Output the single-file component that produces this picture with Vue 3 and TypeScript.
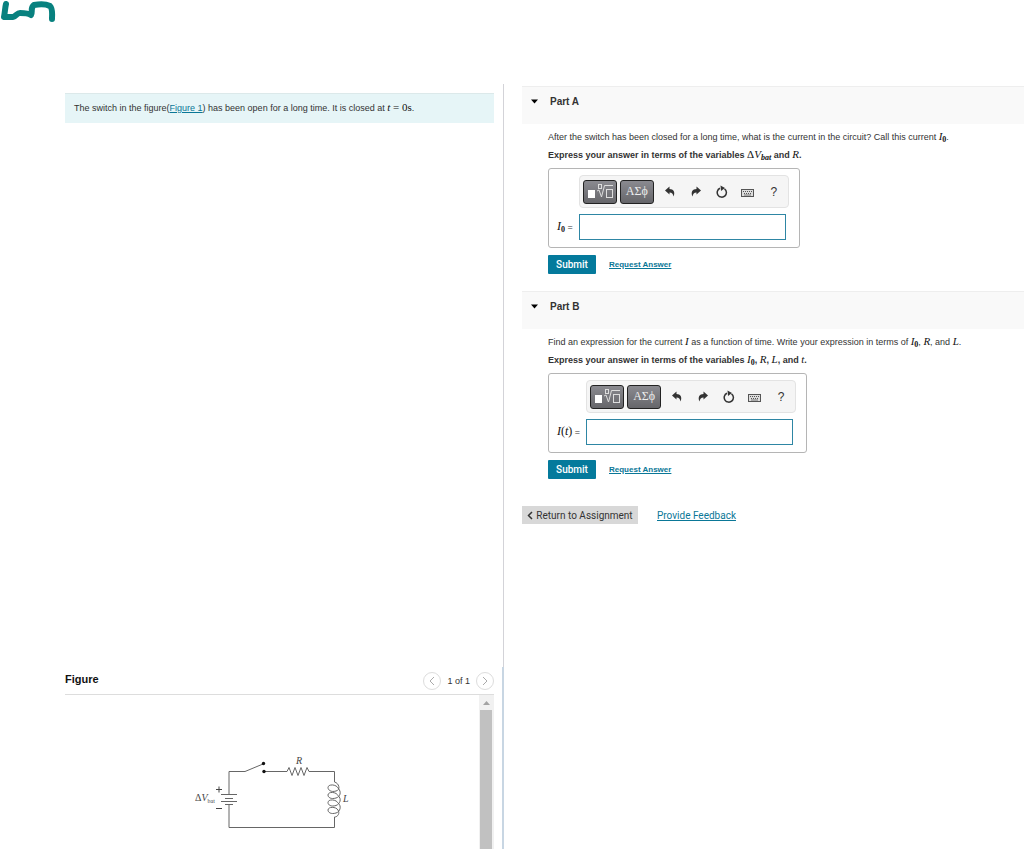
<script setup lang="ts">
import { ref } from 'vue'

interface Piece {
  text: string
  kind?: 'var' | 'num'
  sub?: string
  subItalic?: boolean
}

interface Part {
  id: string
  title: string
  question: Piece[]
  instruction: Piece[]
  label: Piece[]
}

const parts: Part[] = [
  {
    id: 'a',
    title: 'Part A',
    question: [
      { text: 'After the switch has been closed for a long time, what is the current in the circuit? Call this current ' },
      { text: 'I', kind: 'var', sub: '0' },
      { text: '.' },
    ],
    instruction: [
      { text: 'Express your answer in terms of the variables ' },
      { text: 'Δ', kind: 'num' },
      { text: 'V', kind: 'var', sub: 'bat', subItalic: true },
      { text: ' and ' },
      { text: 'R', kind: 'var' },
      { text: '.' },
    ],
    label: [{ text: 'I', kind: 'var', sub: '0' }, { text: ' =' }],
  },
  {
    id: 'b',
    title: 'Part B',
    question: [
      { text: 'Find an expression for the current ' },
      { text: 'I', kind: 'var' },
      { text: ' as a function of time. Write your expression in terms of ' },
      { text: 'I', kind: 'var', sub: '0' },
      { text: ', ' },
      { text: 'R', kind: 'var' },
      { text: ', and ' },
      { text: 'L', kind: 'var' },
      { text: '.' },
    ],
    instruction: [
      { text: 'Express your answer in terms of the variables ' },
      { text: 'I', kind: 'var', sub: '0' },
      { text: ', ' },
      { text: 'R', kind: 'var' },
      { text: ', ' },
      { text: 'L', kind: 'var' },
      { text: ', and ' },
      { text: 't', kind: 'var' },
      { text: '.' },
    ],
    label: [
      { text: 'I', kind: 'var' },
      { text: '(', kind: 'num' },
      { text: 't', kind: 'var' },
      { text: ')', kind: 'num' },
      { text: ' =' },
    ],
  },
]

const answers = ref<Record<string, string>>({ a: '', b: '' })
const open = ref<Record<string, boolean>>({ a: true, b: true })
</script>

<template>
  <div class="page">
    <header class="top">
      <svg class="scribble" width="60" height="24" viewBox="0 0 60 24" aria-hidden="true">
        <path d="M6 4 C5 8 5 12 4 17 H13 C16 16 17 13 20 13 C24 13 28 13 31 15 C33 11 30 8 34 5 C39 4 46 4 50 6 C53 9 52 14 52 19" />
      </svg>
    </header>

    <div class="columns">
      <section class="left">
        <p class="intro">The switch in the figure(<a href="#figure">Figure 1</a>) has been open for a long time. It is closed at <span class="var">t</span><span class="num"> = 0s</span>.</p>

        <div id="figure" class="figure">
          <div class="figure-head">
            <h2>Figure</h2>
            <nav class="pager" aria-label="Figures">
              <button type="button" aria-label="Previous figure">
                <svg width="8" height="10" viewBox="0 0 8 10"><path d="M6 1 L2 5 L6 9" /></svg>
              </button>
              <span>1 of 1</span>
              <button type="button" aria-label="Next figure">
                <svg width="8" height="10" viewBox="0 0 8 10"><path d="M2 1 L6 5 L2 9" /></svg>
              </button>
            </nav>
          </div>
          <div class="figure-body">
            <div class="drawing">
              <svg class="circuit" width="160" height="80" viewBox="0 0 160 80" role="img" aria-label="Circuit with battery, switch, resistor and inductor">
                <g class="wire">
                  <path d="M36 40 V17.500 H52 L70 10" />
                  <path d="M71 17.500 H94 L96 13.500 L99 21.500 L102 13.500 L105 21.500 L108 13.500 L111 21.500 L114 13.500 L116 17.500 H141.500 V28" />
                  <path d="M36 51 V73.500 H141.500 V63" />
                  <path d="M28 40.500 H44 M32 44.500 H40 M28 47.500 H44 M32 50.500 H40" />
                  <path d="M141.500 28 C146 29 148 36 143 37 C138 38.500 135 36 135 33.500 C135 30 143 30 145 34 C149 38 147 43 143 44 C138 45.500 135 43.500 135 41 C135 37.500 143 37.500 145 41.500 C149 45 147 50 143 51.500 C138 53 135 51 135 48.500 C135 45 143 45 145 49 C149 52 147 58 143 59 C138 60.500 135 58.500 135 56 C135 52.500 143 52.500 145 56 C147 59 145 63 141.500 63" />
                </g>
                <g class="sign"><path d="M23 35.500 H29 M26 32.500 V38.500 M23 54.500 H29" /></g>
                <circle cx="70.500" cy="9.500" r="1.700" /><circle cx="71" cy="17.500" r="1.700" />
                <text x="103" y="10" class="it">R</text>
                <text x="150" y="48" class="it">L</text>
                <text x="2" y="47">Δ<tspan class="it">V</tspan><tspan class="small" dy="2">bat</tspan></text>
              </svg>
            </div>
            <div class="scrollbar" aria-hidden="true">
              <svg width="15" height="15" viewBox="0 0 15 15"><path d="M4 10 L7.500 6 L11 10 Z" /></svg>
              <div class="thumb"></div>
            </div>
          </div>
        </div>
      </section>

      <main class="right">
        <section v-for="part in parts" :key="part.id" class="part">
          <h2 class="part-head">
            <button type="button" :aria-expanded="open[part.id]" @click="open[part.id] = !open[part.id]">
              <svg width="7" height="5" viewBox="0 0 7 5" aria-hidden="true"><path d="M0 0.500 H7 L3.500 4.500 Z" /></svg>
              <span>{{ part.title }}</span>
            </button>
          </h2>
          <form v-show="open[part.id]" class="part-body" @submit.prevent>
            <p class="question"><template v-for="(p, i) in part.question" :key="i"><span :class="p.kind">{{ p.text }}</span><sub v-if="p.sub">{{ p.sub }}</sub></template></p>
            <p class="instruction"><template v-for="(p, i) in part.instruction" :key="i"><span :class="p.kind">{{ p.text }}</span><sub v-if="p.sub" :class="{ slanted: p.subItalic }">{{ p.sub }}</sub></template></p>

            <div class="answer">
              <div class="toolbar" role="toolbar" aria-label="Math tools">
                <button type="button" class="dark" aria-label="Templates">
                  <svg width="28" height="20" viewBox="0 0 28 20">
                    <rect x="2" y="8" width="7" height="8" fill="#fff" />
                    <g fill="none" stroke="#ddd">
                      <rect x="12.500" y="2.500" width="3" height="4" />
                      <path d="M11 9 L13 8 L15.500 15 L18.500 3.500 H27" />
                      <rect x="20.500" y="7.500" width="6" height="8" />
                    </g>
                  </svg>
                </button>
                <button type="button" class="dark greek">ΑΣϕ</button>
                <button type="button" class="tool" aria-label="Undo">
                  <svg width="12" height="12" viewBox="0 0 12 12"><path d="M1 4.500 L5.500 0.500 V3 C9.500 3 11.500 6 9.500 10.500 C9 8 8 6.500 5.500 6.500 V8.500 Z" /></svg>
                </button>
                <button type="button" class="tool" aria-label="Redo">
                  <svg width="12" height="12" viewBox="0 0 12 12"><path d="M11 4.500 L6.500 0.500 V3 C2.500 3 0.500 6 2.500 10.500 C3 8 4 6.500 6.500 6.500 V8.500 Z" /></svg>
                </button>
                <button type="button" class="tool" aria-label="Reset">
                  <svg width="12" height="14" viewBox="0 0 12 14"><path d="M8.500 3.800 A4.600 4.600 0 1 1 4 3.300" fill="none" stroke="#333" stroke-width="1.500" /><path d="M4.500 0.500 L9 3 L5 6 Z" /></svg>
                </button>
                <button type="button" class="tool" aria-label="Keyboard shortcuts">
                  <svg width="14" height="12" viewBox="0 0 14 12">
                    <rect x="0.500" y="3.500" width="12" height="7" fill="#ddd" stroke="#555" />
                    <path d="M2 5.500 H11 M3 7.500 H11" fill="none" stroke="#555" stroke-dasharray="1 1" />
                    <path d="M3 9 H10" fill="none" stroke="#777" />
                  </svg>
                </button>
                <button type="button" class="tool help" aria-label="Help">?</button>
              </div>
              <label :for="'answer-' + part.id"><template v-for="(p, i) in part.label" :key="i"><span :class="p.kind">{{ p.text }}</span><sub v-if="p.sub">{{ p.sub }}</sub></template></label>
              <input :id="'answer-' + part.id" v-model="answers[part.id]" type="text" autocomplete="off" />
            </div>

            <div class="actions">
              <button type="submit" class="submit">Submit</button>
              <a href="#answer">Request Answer</a>
            </div>
          </form>
        </section>

        <footer class="foot">
          <button type="button" class="return">
            <svg width="6" height="9" viewBox="0 0 6 9" aria-hidden="true"><path d="M5 1 L1.500 4.500 L5 8" /></svg>
            <span>Return to Assignment</span>
          </button>
          <a href="#feedback">Provide Feedback</a>
        </footer>
      </main>
    </div>
  </div>
</template>

<style>
body {
  background: #fff;
}
</style>

<style scoped>
.page {
  display: flex;
  flex-direction: column;
  min-height: 100vh;
  font-family: "Liberation Sans", Arial, sans-serif;
  font-size: 9px;
  color: #333;
}
.page * {
  box-sizing: border-box;
}
h2, p {
  margin: 0;
}
button {
  font-family: inherit;
  color: inherit;
  padding: 0;
  border: 0;
  background: none;
  cursor: pointer;
}
a {
  color: #0a7797;
}
.var, .num, sub {
  font-family: "Liberation Serif", "Times New Roman", serif;
  font-size: 11px;
  font-weight: 400;
  line-height: 1;
  color: #111;
}
.var {
  font-style: italic;
}
sub {
  font-size: 8px;
  font-weight: 700;
  line-height: 0;
  vertical-align: -2px;
}
.slanted {
  font-style: italic;
}

.top {
  height: 84px;
}
.scribble {
  display: block;
}
.scribble path {
  fill: none;
  stroke: #08817f;
  stroke-width: 6;
  stroke-linecap: round;
  stroke-linejoin: round;
}

.columns {
  flex: 1;
  display: grid;
  grid-template-columns: 63fr 65fr;
}
.left {
  display: flex;
  flex-direction: column;
  justify-content: space-between;
  padding-left: 65px;
  border-right: 1px solid #d3d3d8;
}
.intro {
  margin: 9px 9px 0 0;
  padding: 0 9px;
  border-top: 1px solid #dce9ea;
  background: #e6f5f7;
  line-height: 29px;
}

.figure {
  margin-right: -1px;
  padding-right: 8px;
  border-right: 2px solid #c8d6e3;
}
.figure-head {
  display: flex;
  align-items: center;
  justify-content: space-between;
  height: 28px;
  border-bottom: 1px solid #ddd;
}
.figure-head h2 {
  padding-bottom: 4px;
  font-size: 11px;
  color: #111;
}
.pager {
  display: flex;
  align-items: center;
  gap: 6px;
}
.pager button {
  display: flex;
  align-items: center;
  justify-content: center;
  width: 18px;
  height: 18px;
  border: 1px solid #ddd;
  border-radius: 50%;
}
.pager path {
  fill: none;
  stroke: #aaa;
}
.figure-body {
  display: flex;
  height: 154px;
}
.drawing {
  flex: 1;
  padding: 59px 0 0 128px;
}
.circuit {
  display: block;
}
.wire {
  fill: none;
  stroke: #666;
}
.sign {
  stroke: #444;
}
.circuit circle {
  fill: #111;
}
.circuit text {
  font-family: "Liberation Serif", "Times New Roman", serif;
  font-size: 10px;
  fill: #444;
}
.circuit .it {
  font-style: italic;
}
.circuit .small {
  font-size: 6px;
}
.scrollbar {
  display: flex;
  flex-direction: column;
  width: 15px;
  background: #f1f1f1;
}
.scrollbar path {
  fill: #a3a3a3;
}
.thumb {
  flex: 1;
  margin: 0 2px 0 1px;
  background: #c1c1c1;
}

.right {
  padding: 2px 0 0 18px;
}
.part-head {
  height: 38px;
  border-top: 1px solid #eee;
  background: #f9f9f9;
}
.part-head button {
  display: flex;
  align-items: center;
  gap: 12px;
  width: 100%;
  height: 28px;
  padding-left: 9px;
  font-size: 10px;
  font-weight: 700;
}
.part-body {
  padding: 4px 8px 17px 26px;
}
.question, .instruction {
  line-height: 18px;
  height: 18px;
  white-space: nowrap;
}
.instruction {
  font-weight: 700;
}
.answer {
  display: grid;
  grid-template-columns: auto 210px;
  gap: 6px;
  align-items: center;
  width: max-content;
  margin-top: 4px;
  padding: 6px 10px 7px 8px;
  border: 1px solid #b5b5b5;
  border-radius: 3px;
}
.toolbar {
  grid-column: 2;
  display: flex;
  align-items: center;
  height: 33px;
  padding-left: 3px;
  border: 1px solid #e3e3e3;
  border-radius: 4px;
  background: #f5f5f5;
}
.dark {
  display: flex;
  align-items: center;
  justify-content: center;
  width: 34px;
  height: 24px;
  margin-right: 3px;
  border: 1px solid #222;
  border-radius: 3px;
  background: linear-gradient(#8a8a90, #66666a);
}
.greek {
  font-family: "Liberation Serif", serif;
  font-size: 12px;
  color: #eee;
}
.tool {
  display: flex;
  align-items: center;
  justify-content: center;
  width: 26px;
  height: 24px;
  fill: #333;
}
.help {
  font-size: 12px;
}
.answer label {
  padding-bottom: 3px;
  white-space: pre;
}
.answer label .var, .answer label .num {
  font-size: 12px;
}
.answer input {
  width: 207px;
  height: 26px;
  padding: 0 6px;
  border: 1px solid #2e86a4;
  background: #fff;
  font-size: 12px;
}
.actions {
  display: flex;
  align-items: center;
  gap: 13px;
  margin-top: 7px;
}
.submit {
  width: 48px;
  height: 19px;
  border-radius: 1px;
  background: #047a9c;
  color: #fff;
  font-family: Roboto, sans-serif;
  font-size: 10px;
  font-weight: 500;
}
.actions a {
  font-size: 8px;
  font-weight: 700;
}
.foot {
  display: flex;
  align-items: center;
  gap: 19px;
  padding-top: 10px;
  font-family: Roboto, sans-serif;
}
.return {
  display: flex;
  align-items: center;
  justify-content: center;
  gap: 3px;
  width: 116px;
  height: 18px;
  background: #d8d8d8;
  font-size: 10px;
}
.return path {
  fill: none;
  stroke: #333;
  stroke-width: 1.500;
}
.foot a {
  font-size: 10px;
}
</style>
